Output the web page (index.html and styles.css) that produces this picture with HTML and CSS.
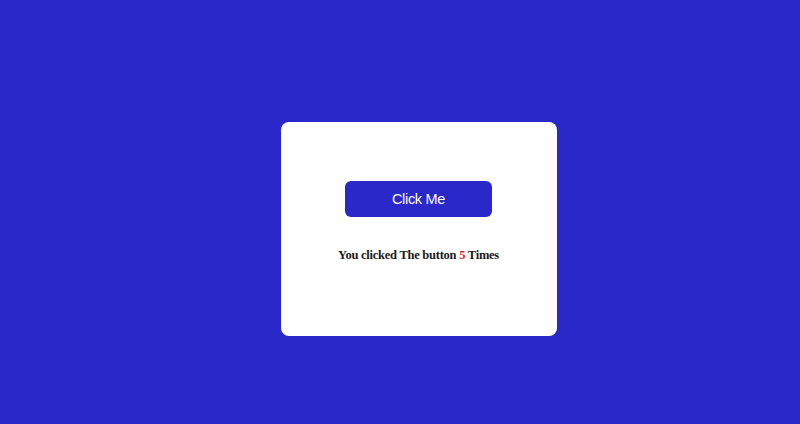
FILE: index.html
```html
<!DOCTYPE html>
<html>
<head>
<meta charset="utf-8">
<link rel="stylesheet" href="styles.css">
</head>
<body>
<main class="page">
  <div class="card">
    <button class="btn">Click Me</button>
    <p class="count">You clicked The button <span class="num">5</span> Times</p>
  </div>
</main>
</body>
</html>
```
FILE: styles.css
```css
html, body {
  margin: 0;
  padding: 0;
  height: 100%;
}
body {
  background: #2a28c9;
}
.page {
  box-sizing: border-box;
  height: 100%;
  padding: 34px 0 0 37px;
  display: flex;
  align-items: center;
  justify-content: center;
}
.card {
  width: 276px;
  height: 214px;
  background: #fff;
  border-radius: 8px;
  box-sizing: border-box;
  padding-top: 59px;
  display: flex;
  flex-direction: column;
  align-items: center;
}
.btn {
  width: 147px;
  height: 36px;
  border: none;
  border-radius: 6px;
  background: #2a28c9;
  color: #fff;
  font-family: "Liberation Sans", Arial, sans-serif;
  font-size: 14.5px;
  letter-spacing: -0.3px;
  padding: 0;
}
.count {
  margin: 31px 0 0;
  font-family: "Liberation Serif", "Times New Roman", serif;
  font-weight: bold;
  font-size: 12.5px;
  letter-spacing: -0.25px;
  color: #1a1a1a;
}
.num {
  color: #e0201a;
}
```
